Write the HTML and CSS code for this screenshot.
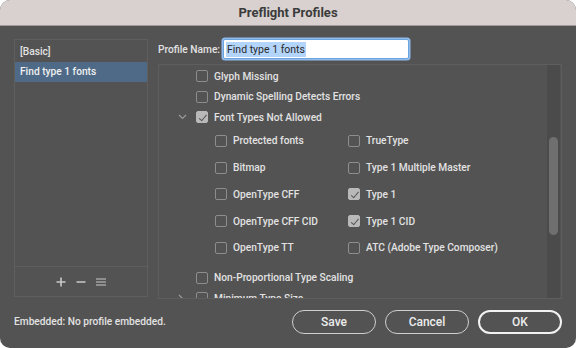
FILE: index.html
```html
<!DOCTYPE html>
<html>
<head>
<meta charset="utf-8">
<link rel="stylesheet" href="styles.css">
</head>
<body>
<div class="window">
  <div class="titlebar">Preflight Profiles</div>
  <div class="main">
    <div class="left">
      <div class="list">
        <div class="item">[Basic]</div>
        <div class="item selected">Find type 1 fonts</div>
      </div>
      <div class="toolbar">
        <svg width="12" height="12" viewBox="0 0 12 12"><path d="M6 1.5v9M1.5 6h9" stroke="#c9c9c9" stroke-width="1.6"/></svg>
        <svg width="12" height="12" viewBox="0 0 12 12"><path d="M1.5 6h9" stroke="#c9c9c9" stroke-width="1.6"/></svg>
        <svg width="12" height="12" viewBox="0 0 12 12"><path d="M1 3h10M1 6h10M1 9h10" stroke="#c9c9c9" stroke-width="1.2"/></svg>
      </div>
    </div>
    <div class="right">
      <div class="namerow">
        <span class="label">Profile Name:</span>
        <div class="input"><span class="sel">Find type 1 fonts</span></div>
      </div>
      <div class="tree">
        <div class="content">
          <div class="row"><span class="chev"></span><span class="cb"></span><span>Glyph Missing</span></div>
          <div class="row"><span class="chev"></span><span class="cb"></span><span>Dynamic Spelling Detects Errors</span></div>
          <div class="row"><span class="chev"><svg width="9" height="6" viewBox="0 0 9 6"><path d="M1 1l3.5 3.5L8 1" fill="none" stroke="#9a9a9a" stroke-width="1.2"/></svg></span><span class="cb on"></span><span>Font Types Not Allowed</span></div>
          <div class="sub">
            <div class="opt"><span class="cb"></span><span>Protected fonts</span></div>
            <div class="opt"><span class="cb"></span><span>TrueType</span></div>
            <div class="opt"><span class="cb"></span><span>Bitmap</span></div>
            <div class="opt"><span class="cb"></span><span>Type 1 Multiple Master</span></div>
            <div class="opt"><span class="cb"></span><span>OpenType CFF</span></div>
            <div class="opt"><span class="cb on"></span><span>Type 1</span></div>
            <div class="opt"><span class="cb"></span><span>OpenType CFF CID</span></div>
            <div class="opt"><span class="cb on"></span><span>Type 1 CID</span></div>
            <div class="opt"><span class="cb"></span><span>OpenType TT</span></div>
            <div class="opt"><span class="cb"></span><span>ATC (Adobe Type Composer)</span></div>
          </div>
          <div class="row gap"><span class="chev"></span><span class="cb"></span><span>Non-Proportional Type Scaling</span></div>
          <div class="row"><span class="chev"><svg width="6" height="9" viewBox="0 0 6 9"><path d="M1 1l3.5 3.5L1 8" fill="none" stroke="#9a9a9a" stroke-width="1.2"/></svg></span><span class="cb"></span><span>Minimum Type Size</span></div>
        </div>
        <div class="scrollbar"><div class="thumb"></div></div>
      </div>
    </div>
  </div>
  <div class="footer">
    <span class="embedded">Embedded: No profile embedded.</span>
    <div class="buttons">
      <button class="btn">Save</button>
      <button class="btn">Cancel</button>
      <button class="btn ok">OK</button>
    </div>
  </div>
</div>
</body>
</html>
```

FILE: styles.css
```css
* { box-sizing: border-box; }
html, body { margin: 0; padding: 0; background: #ffffff; }
body {
  font-family: Roboto, "Liberation Sans", sans-serif;
  font-size: 10.2px;
  font-weight: 500;
  color: #e2e2e2;
}
.window {
  width: 576px;
  height: 348px;
  background: #535353;
  border-radius: 10px;
  overflow: hidden;
  display: flex;
  flex-direction: column;
}
.titlebar {
  height: 26px;
  background: #d8d1cf;
  border-bottom: 1px solid #9f9b9a;
  color: #3b3b3b;
  font-weight: 700;
  font-size: 13px;
  display: flex;
  align-items: center;
  justify-content: center;
}
.main {
  display: flex;
  gap: 10px;
  padding: 13px 14px 0 14px;
  height: 273px;
}
.left {
  width: 134px;
  height: 258px;
  border: 1px solid #5f5f5f;
  display: flex;
  flex-direction: column;
}
.list { flex: 1; padding-top: 2px; }
.item {
  height: 20px;
  line-height: 20px;
  padding-left: 5px;
}
.item.selected { background: #4e6a87; color: #f0f0f0; }
.toolbar {
  height: 30px;
  border-top: 1px solid #5f5f5f;
  display: flex;
  align-items: center;
  justify-content: center;
  gap: 8px;
}
.right {
  width: 404px;
  display: flex;
  flex-direction: column;
  gap: 5px;
}
.namerow {
  height: 20px;
  display: flex;
  align-items: center;
  gap: 5px;
}
.label { color: #e2e2e2; width: 60px; flex: none; white-space: nowrap; }
.input {
  width: 186px;
  height: 20px;
  background: #ffffff;
  border: 1px solid #6ea4dd;
  box-shadow: 0 0 0 1.5px #8fbbed;
  border-radius: 2px;
  display: flex;
  align-items: center;
  padding-left: 2px;
  color: #2a2a2a;
  font-weight: 400;
  font-size: 10.5px;
}
.sel { background: #b4d5fb; padding: 1px 1px; }
.tree {
  height: 235px;
  border: 1px solid #5e5e5e;
  display: flex;
  overflow: hidden;
}
.content {
  flex: 1;
  padding-top: 1px;
  overflow: hidden;
}
.row {
  height: 20.5px;
  display: flex;
  align-items: center;
  white-space: nowrap;
}
.chev {
  width: 37px;
  padding-left: 19px;
  display: flex;
  align-items: center;
}
.cb {
  width: 12px;
  height: 12px;
  border: 1px solid #8d8d8d;
  border-radius: 2px;
  margin-right: 6px;
  flex: none;
  position: relative;
}
.cb.on {
  background: #b9b9b9;
  border-color: #b9b9b9;
}
.cb.on::after {
  content: "";
  position: absolute;
  left: 3.5px;
  top: 0.5px;
  width: 3px;
  height: 6.5px;
  border: solid #555555;
  border-width: 0 1.5px 1.5px 0;
  transform: rotate(40deg);
}
.sub {
  display: grid;
  grid-template-columns: 133px 200px;
  padding-left: 56px;
}
.opt {
  height: 26.75px;
  display: flex;
  align-items: center;
  white-space: nowrap;
}
.row.gap { margin-top: 6px; }
.scrollbar {
  width: 13px;
  margin-right: 1px;
  background: #4b4b4b;
  padding: 72px 2px 0 2px;
}
.thumb {
  width: 9px;
  height: 98px;
  background: #6f6f6f;
  border-radius: 5px;
}
.footer {
  flex: 1;
  display: flex;
  align-items: center;
  justify-content: space-between;
  padding: 0 14px 4px 14px;
}
.buttons { display: flex; gap: 9px; }
.btn {
  width: 84px;
  height: 24px;
  border-radius: 12px;
  border: 1.5px solid #cfcfcf;
  background: transparent;
  color: #ececec;
  font-family: Roboto, "Liberation Sans", sans-serif;
  font-size: 12px;
  font-weight: 500;
  padding: 0;
}
.btn.ok { border: 2px solid #f2f2f2; }
```
